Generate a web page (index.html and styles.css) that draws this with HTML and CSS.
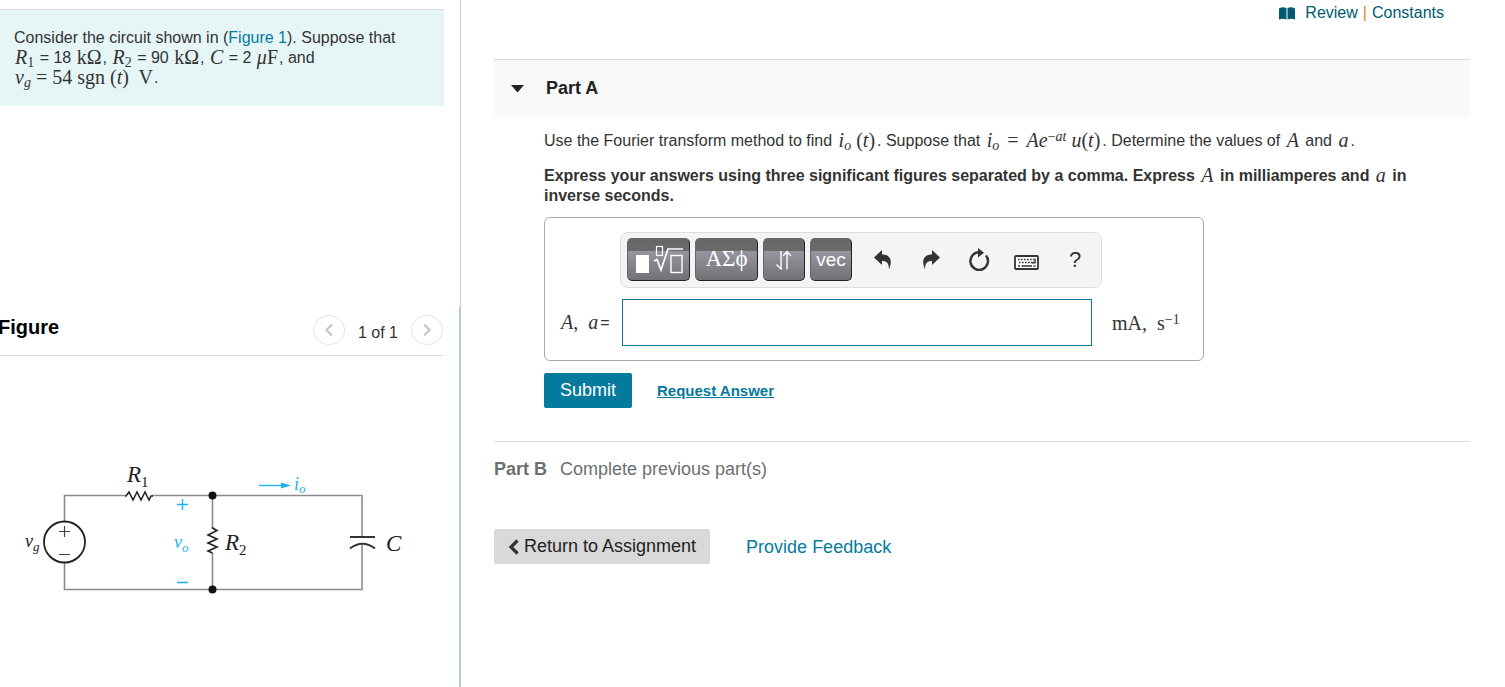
FILE: index.html
```
<!DOCTYPE html>
<html lang="en">
<head>
    <meta charset="UTF-8">
    <meta name="viewport" content="width=device-width, initial-scale=1.0">
    <title>Part A - Fourier Transform</title>
    <link rel="stylesheet" href="styles.css">
</head>
<body>
    <div class="page">
        <aside class="sidebar">
            <section class="intro">
                <div class="prompt">
                    Consider the circuit shown in (<a href="#figure">Figure 1</a>). Suppose that<br>
                    <span class="math"><i>R</i><sub>1</sub></span> = 18 <span class="math">kΩ</span>, <span class="math"><i>R</i><sub>2</sub></span> = 90 <span class="math">kΩ</span>, <span class="math"><i>C</i></span> = 2 <span class="math"><i>μ</i>F</span>, and<br>
                    <span class="math"><i>v</i><sub><i>g</i></sub> = 54 sgn (<i>t</i>)&nbsp; V</span>.
                </div>
            </section>
            <section class="figure" id="figure">
                <div class="figure-header">
                    <h2>Figure</h2>
                    <div class="pager">
                        <button type="button" class="round" aria-label="Previous figure">
                            <svg width="10" height="14" viewBox="0 0 10 14"><path d="M8 1.5 2.5 7 8 12.5" fill="none" stroke="#c4c4c4" stroke-width="2.2"/></svg>
                        </button>
                        <span>1 of 1</span>
                        <button type="button" class="round" aria-label="Next figure">
                            <svg width="10" height="14" viewBox="0 0 10 14"><path d="M2 1.5 7.5 7 2 12.5" fill="none" stroke="#c4c4c4" stroke-width="2.2"/></svg>
                        </button>
                    </div>
                </div>
                <svg class="circuit" viewBox="0 0 443 150" role="img" aria-label="Circuit diagram">
                    <!-- wires -->
                    <g fill="none" stroke="#8b8b8b" stroke-width="1.6">
                        <path d="M64.5 71V45.5H125M152 45.5H362V86M362 95V139.5H64.5V112"/>
                        <path d="M212.5 46V77M212.5 103V139"/>
                    </g>
                    <!-- source -->
                    <circle cx="64.5" cy="92" r="20.5" fill="#fff" stroke="#222" stroke-width="1.8"/>
                    <path d="M59 81.5H70M64.5 76V87M59 104.5H70" stroke="#444" stroke-width="1.2"/>
                    <!-- resistors -->
                    <g fill="none" stroke="#222" stroke-width="1.6">
                        <path d="M125 46H126L129 42 133 50 137 42 141 50 145 42 149 50 151 46H153"/>
                        <path d="M212.5 77V78L217 80.5 208 85 217 89 208 93 217 97 208 101 212.5 103"/>
                    </g>
                    <!-- capacitor -->
                    <path d="M350 87H375" stroke="#333" stroke-width="2"/>
                    <path d="M350 98.5Q362.5 89 375 98.5" fill="none" stroke="#333" stroke-width="1.9"/>
                    <circle cx="212.5" cy="45.5" r="4" fill="#111"/>
                    <circle cx="212.5" cy="139.5" r="4" fill="#111"/>
                    <!-- polarity and current -->
                    <g stroke="#1fb0f5" stroke-width="1.4">
                        <path d="M177 54.5H188M182.5 49V60M177 132.5H188"/>
                        <path d="M259 35.5H283"/>
                        <path d="M281 32.5 291 35.5 281 38.5Z" fill="#1fb0f5" stroke="none"/>
                    </g>
                    <g class="labels">
                        <text x="127" y="32">R<tspan class="low up" dy="5">1</tspan></text>
                        <text x="225" y="100">R<tspan class="low up" dy="5">2</tspan></text>
                        <text x="386" y="101">C</text>
                        <text class="small" x="25" y="97">v<tspan class="low" dy="4">g</tspan></text>
                        <text class="small blue" x="174" y="98">v<tspan class="low" dy="4">o</tspan></text>
                        <text class="small blue" x="294" y="40">i<tspan class="low" dy="3">o</tspan></text>
                    </g>
                </svg>
            </section>
        </aside>

        <main class="content">
            <nav class="top-links">
                <svg width="16" height="13" viewBox="0 0 16 13"><path d="M0 1.5Q3.5-.5 7.5 1V12.5Q4 11 0 12.5ZM8.5 1Q12.5-.5 16 1.5V12.5Q12 11 8.5 12.5Z" fill="#005a70"/></svg>
                <a href="#">Review</a>
                <span class="bar">|</span>
                <a href="#">Constants</a>
            </nav>

            <button type="button" class="part-header" aria-expanded="true">
                <svg width="13" height="8" viewBox="0 0 13 8"><path d="M0 0H13L6.5 7.5Z" fill="#222"/></svg>
                Part A
            </button>

            <div class="part-body">
                <p>Use the Fourier transform method to find <span class="math"><i>i</i><sub><i>o</i></sub> (<i>t</i>)</span>. Suppose that <span class="math"><i>i</i><sub><i>o</i></sub><span class="rel">=</span><i>Ae</i><sup>−<i>at</i></sup> <i>u</i>(<i>t</i>)</span>. Determine the values of <span class="math"><i>A</i></span> and <span class="math"><i>a</i></span>.</p>
                <p class="instructions">Express your answers using three significant figures separated by a comma. Express <span class="math"><i>A</i></span> in milliamperes and <span class="math"><i>a</i></span> in inverse seconds.</p>

                <form class="answer" id="answer-form">
                    <div class="toolbar">
                        <button type="button" class="dark wide" aria-label="Templates">
                            <svg width="50" height="30" viewBox="0 0 50 30">
                                <rect x="2" y="10" width="13" height="18" fill="#fff"/>
                                <g fill="none" stroke="#fff">
                                    <rect x="22.5" y="1.5" width="6" height="9" stroke-width="1.2"/>
                                    <path d="M20 16 23 14.5 27 25 34 4H49" stroke-width="1.7"/>
                                    <rect x="37" y="10.5" width="11" height="17" stroke-width="1.4"/>
                                </g>
                            </svg>
                        </button>
                        <button type="button" class="dark wide greek">ΑΣϕ</button>
                        <button type="button" class="dark" aria-label="Subscript and superscript">
                            <svg width="18" height="22" viewBox="0 0 18 22"><path d="M6 2V19.5M1.5 15.5 6 20 7 19M12 20.5V3M8 7 12 2.5 16 7" fill="none" stroke="#fff" stroke-width="1.4"/></svg>
                        </button>
                        <button type="button" class="dark">vec</button>
                        <div class="tools">
                            <button type="button" class="tool" aria-label="Undo">
                                <svg width="18" height="20" viewBox="0 0 18 20"><path d="M0 7.5 8 0V4.5C16 4.5 19 10 15 19.5 15 13.5 13 11 8 11V15Z" fill="#333"/></svg>
                            </button>
                            <button type="button" class="tool" aria-label="Redo">
                                <svg width="18" height="20" viewBox="0 0 18 20"><path d="M18 7.5 10 0V4.5C2 4.5-1 10 3 19.5 3 13.5 5 11 10 11V15Z" fill="#333"/></svg>
                            </button>
                            <button type="button" class="tool" aria-label="Reset">
                                <svg width="22" height="24" viewBox="0 0 22 24"><path d="M12 4.3A8.8 8.8 0 1 0 18 7.5" fill="none" stroke="#333" stroke-width="2.4"/><path d="M10 0 16 4.7 10 9.5Z" fill="#333"/></svg>
                            </button>
                            <button type="button" class="tool" aria-label="Keyboard shortcuts">
                                <svg width="26" height="22" viewBox="0 0 26 22">
                                    <rect x="1" y="7" width="23" height="13" rx="1" fill="#fff" stroke="#333" stroke-width="1.8"/>
                                    <path d="M4 10.5H20M5 13.5H19" stroke="#333" stroke-width="1.6" stroke-dasharray="1.6 1.4"/>
                                    <path d="M18 13.8H21V9.5M4 17H6M7.5 17H18M19.5 17H21.5" fill="none" stroke="#333" stroke-width="1.4"/>
                                </svg>
                            </button>
                            <button type="button" class="tool help" aria-label="Help">?</button>
                        </div>
                    </div>
                    <div class="answer-row">
                        <label for="answer"><span class="math"><i>A</i>,&nbsp; <i>a</i></span>=</label>
                        <input type="text" id="answer" name="answer">
                        <span class="math units">mA,&nbsp; s<sup>−1</sup></span>
                    </div>
                </form>

                <div class="actions">
                    <button type="submit" class="submit" form="answer-form">Submit</button>
                    <a class="request" href="#">Request Answer</a>
                </div>
            </div>

            <div class="part-b"><b>Part B</b> Complete previous part(s)</div>

            <div class="bottom">
                <button type="button" class="return">
                    <svg width="11" height="16" viewBox="0 0 11 16"><path d="M9.5 1.5 3 8 9.5 14.5" fill="none" stroke="#333" stroke-width="3.2"/></svg>
                    Return to Assignment
                </button>
                <a href="#">Provide Feedback</a>
            </div>
        </main>
    </div>
</body>
</html>
```
FILE: styles.css
```
* {
    box-sizing: border-box;
}
body {
    margin: 0;
    font-family: "Liberation Sans", Arial, sans-serif;
    font-size: 16px;
    line-height: 20px;
    color: #333;
    background-color: #fff;
}
a {
    color: #047a9c;
    text-decoration: none;
}
button {
    font-family: inherit;
    cursor: pointer;
}
svg {
    display: block;
}
.page {
    display: flex;
    min-height: 100vh;
}

/* math */
.math {
    padding: 0 2px;
    font-family: "Liberation Serif", "Times New Roman", serif;
    font-size: 20px;
    font-weight: normal;
    line-height: 0;
    vertical-align: -1px;
}
.math sub,
.math sup {
    font-size: 14px;
    line-height: 0;
}
.math sub {
    vertical-align: -3px;
}
.math sup {
    vertical-align: 6px;
}
.math .rel {
    padding: 0 8px;
}

/* left side */
.sidebar {
    display: flex;
    flex-direction: column;
    flex: 0 0 461px;
}
.intro {
    height: 307px;
    padding: 9px 16px 0 0;
    border-right: 1px solid #b8cbdf;
}
.prompt {
    padding: 18px 14px;
    border-top: 1px solid #dcdcdc;
    background-color: #e6f6f7;
}
.prompt .math {
    padding: 0 1px;
}
.figure {
    flex: 1;
    padding-right: 16px;
    border-right: 2px solid #b8cbdf;
}
.figure-header {
    display: flex;
    align-items: center;
    justify-content: space-between;
    height: 49px;
    border-bottom: 1px solid #dcdcdc;
}
.figure-header h2 {
    margin: 0 0 8px -2px;
    font-size: 20px;
    color: #000;
}
.pager {
    display: flex;
    align-items: center;
    gap: 13px;
    padding-bottom: 2px;
}
.pager span {
    padding-top: 6px;
}
.round {
    display: flex;
    align-items: center;
    justify-content: center;
    width: 32px;
    height: 30px;
    padding: 0;
    border: 1px solid #e4e4e4;
    border-radius: 50%;
    background-color: #fff;
}
.circuit {
    width: 100%;
    max-width: 443px;
    margin-top: 94px;
}
.labels {
    font-family: "Liberation Serif", "Times New Roman", serif;
    font-size: 23px;
    font-style: italic;
    fill: #222;
}
.labels .low {
    font-size: 15px;
}
.labels .up {
    font-style: normal;
}
.labels .small {
    font-size: 18px;
}
.labels .small .low {
    font-size: 13px;
}
.labels .blue {
    fill: #1fb0f5;
}

/* right side */
.content {
    flex: 1;
    min-width: 0;
    padding: 3px 35px 0 33px;
}
.top-links {
    display: flex;
    align-items: center;
    justify-content: flex-end;
    padding-right: 26px;
}
.top-links svg {
    margin-right: 10px;
}
.top-links a {
    color: #005a70;
}
.top-links .bar {
    padding: 0 5px;
    color: #d08a1d;
}
.part-header {
    display: flex;
    align-items: center;
    gap: 22px;
    width: 100%;
    height: 58px;
    margin-top: 36px;
    padding: 0 17px;
    border: 0;
    border-top: 1px solid #dcdcdc;
    background-color: #f9f9f9;
    font-size: 18px;
    font-weight: bold;
    color: #222;
}
.part-body {
    padding: 14px 50px 33px;
    border-bottom: 1px solid #dcdcdc;
}
.part-body p {
    margin: 0 0 15px;
}
.part-body .instructions {
    margin-bottom: 11px;
    font-weight: bold;
}
.answer {
    max-width: 660px;
    padding: 14px;
    border: 1px solid #aaa;
    border-radius: 6px;
}
.toolbar {
    display: flex;
    gap: 5px;
    width: 482px;
    height: 56px;
    margin-left: 61px;
    padding: 5px 6px;
    border: 1px solid #ddd;
    border-radius: 8px;
    background-color: #f4f4f4;
}
.dark {
    display: flex;
    align-items: center;
    justify-content: center;
    width: 42px;
    height: 43px;
    padding: 0;
    border: 1px solid #666;
    border-right-color: #222;
    border-bottom-color: #222;
    border-radius: 5px;
    background: linear-gradient(#666 0, #6b6b6b 30%, #96959e 30%, #727176 100%);
    font-size: 19px;
    color: #fff;
}
.dark.wide {
    width: 63px;
}
.dark.greek {
    padding-bottom: 2px;
    font-family: "Liberation Serif", "Times New Roman", serif;
    font-size: 23px;
}
.tools {
    display: flex;
    gap: 16px;
    padding-left: 10px;
}
.tool {
    display: flex;
    align-items: center;
    justify-content: center;
    width: 32px;
    height: 43px;
    padding: 0;
    border: 0;
    background: none;
    color: #333;
}
.tool.help {
    font-size: 22px;
}
.answer-row {
    display: flex;
    align-items: center;
    margin-top: 11px;
}
.answer-row label {
    width: 63px;
    white-space: nowrap;
}
.answer-row input {
    width: 470px;
    height: 47px;
    padding: 0 10px;
    border: 1px solid #047a9c;
    font-size: 20px;
}
.units {
    margin-left: 18px;
    line-height: 20px;
}
.actions {
    display: flex;
    align-items: center;
    gap: 25px;
    margin-top: 12px;
}
.submit {
    height: 35px;
    padding: 0 16px;
    border: 0;
    border-radius: 2px;
    background-color: #047a9c;
    font-size: 18px;
    color: #fff;
}
.request {
    font-size: 15px;
    font-weight: bold;
    text-decoration: underline;
}
.part-b {
    padding-top: 17px;
    font-size: 18px;
    color: #6a7070;
}
.part-b b {
    margin-right: 8px;
}
.bottom {
    display: flex;
    align-items: center;
    gap: 36px;
    margin-top: 50px;
    font-size: 18px;
}
.return {
    display: flex;
    align-items: center;
    gap: 5px;
    height: 35px;
    padding: 0 14px;
    border: 0;
    border-radius: 2px;
    background-color: #d9d9d9;
    font-size: 18px;
    color: #222;
}
```
